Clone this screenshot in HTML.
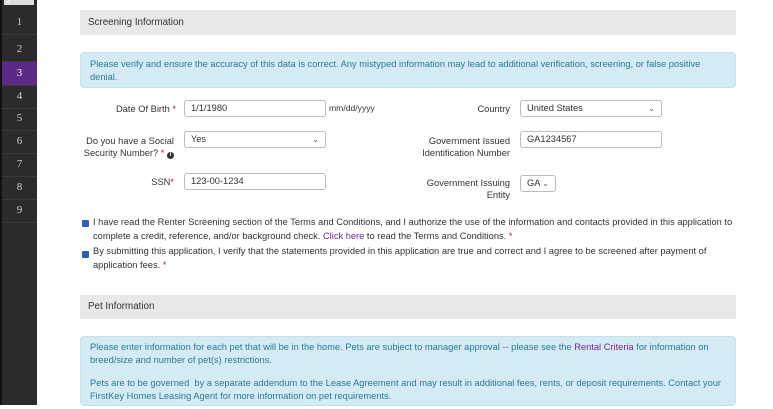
<!DOCTYPE html><html><head><style>
body{margin:0;width:773px;height:409px;background:#fff;position:relative;overflow:hidden;font-family:"Liberation Sans",sans-serif;font-size:9px;color:#333}
.a{position:absolute}
.sb{left:0;top:0;width:37px;height:405px;background:#2b2b2b;border-left:2px solid #111;box-sizing:border-box}
.n{position:absolute;left:2px;width:35px;text-align:center;font-family:"Liberation Serif",serif;font-size:11px;color:#ccc;height:23px;line-height:23px;border-bottom:1px solid #3a3a3a}
.hd{left:80px;width:656px;height:25px;background:#e8e8e8;line-height:25px;text-indent:8px;font-size:9.8px;color:#333}
.al{left:80px;width:656px;background:#d4eaf4;border:1px solid #c3e2ef;border-radius:4px;box-sizing:border-box;color:#2a7a96;padding:5px 9px;line-height:13px;font-size:9.3px}
.in{border:1px solid #bbb;border-radius:3px;height:17px;box-sizing:border-box;line-height:15px;padding-left:6px;font-size:9.3px;color:#333}
.lb{text-align:right;font-size:9.3px;line-height:12px}
.s{color:#c0202f}
.ch{position:absolute;right:6px;top:0;font-size:8px;color:#555}
.cb{width:7px;height:7px;background:#2f5fb0;border-radius:1px}
.t{font-size:9.3px;line-height:14px;color:#333}
</style></head><body>
<div class="a sb"></div>
<div class="a" style="left:4px;top:0;width:30px;height:5px;background:#ddd"></div>
<div class="a" style="left:6px;top:-5px;color:#fff;font-size:9px;font-family:'Liberation Serif',serif">3</div>
<div class="n" style="top:8px;height:26px;line-height:28px">1</div>
<div class="n" style="top:38px">2</div>
<div class="n" style="top:62px;background:#5b2a86;color:#eee">3</div>
<div class="n" style="top:85px">4</div>
<div class="n" style="top:107px">5</div>
<div class="n" style="top:130px">6</div>
<div class="n" style="top:153px">7</div>
<div class="n" style="top:176px">8</div>
<div class="n" style="top:199px">9</div>

<div class="a hd" style="top:10px">Screening Information</div>
<div class="a al" style="top:52px;height:36px">Please verify and ensure the accuracy of this data is correct. Any mistyped information may lead to additional verification, screening, or false positive denial.</div>

<div class="a lb" style="left:80px;width:96px;top:103px">Date Of Birth <span class="s">*</span></div>
<div class="a in" style="left:184px;top:100px;width:142px">1/1/1980</div>
<div class="a" style="left:329px;top:103px;font-size:8.6px">mm/dd/yyyy</div>
<div class="a lb" style="left:70px;width:104px;top:135px">Do you have a Social<br>Security Number? <span class="s">*</span> <span style="display:inline-block;width:7px;height:7px;border-radius:50%;background:#333;color:#fff;font-size:6px;line-height:7px;text-align:center;font-weight:bold">i</span></div>
<div class="a in" style="left:184px;top:131px;width:142px">Yes<span class="ch">⌄</span></div>
<div class="a lb" style="left:80px;width:94px;top:176px">SSN<span class="s">*</span></div>
<div class="a in" style="left:184px;top:173px;width:142px">123-00-1234</div>

<div class="a lb" style="left:390px;width:120px;top:103px">Country</div>
<div class="a in" style="left:520px;top:100px;width:142px">United States<span class="ch">⌄</span></div>
<div class="a lb" style="left:390px;width:120px;top:135px">Government Issued<br>Identification Number</div>
<div class="a in" style="left:520px;top:131px;width:142px">GA1234567</div>
<div class="a lb" style="left:390px;width:120px;top:177px">Government Issuing<br>Entity</div>
<div class="a in" style="left:520px;top:175px;width:36px">GA<span class="ch">⌄</span></div>

<div class="a cb" style="left:82px;top:220px"></div>
<div class="a t" style="left:93px;top:215px;width:640px">I have read the Renter Screening section of the Terms and Conditions, and I authorize the use of the information and contacts provided in this application to complete a credit, reference, and/or background check. <span style="color:#6a2a9a">Click here</span> to read the Terms and Conditions. <span class="s">*</span></div>
<div class="a cb" style="left:82px;top:251px"></div>
<div class="a t" style="left:93px;top:244px;width:630px">By submitting this application, I verify that the statements provided in this application are true and correct and I agree to be screened after payment of application fees. <span class="s">*</span></div>

<div class="a hd" style="top:295px;height:24px;line-height:24px">Pet Information</div>
<div class="a al" style="top:336px;height:70px;padding-top:4px">Please enter information for each pet that will be in the home. Pets are subject to manager approval -- please see the <span style="color:#7a2a8a">Rental Criteria</span> for information on breed/size and number of pet(s) restrictions.<br><div style="height:10px"></div>Pets are to be governed&nbsp; by a separate addendum to the Lease Agreement and may result in additional fees, rents, or deposit requirements. Contact your FirstKey Homes Leasing Agent for more information on pet requirements.</div>
</body></html>
